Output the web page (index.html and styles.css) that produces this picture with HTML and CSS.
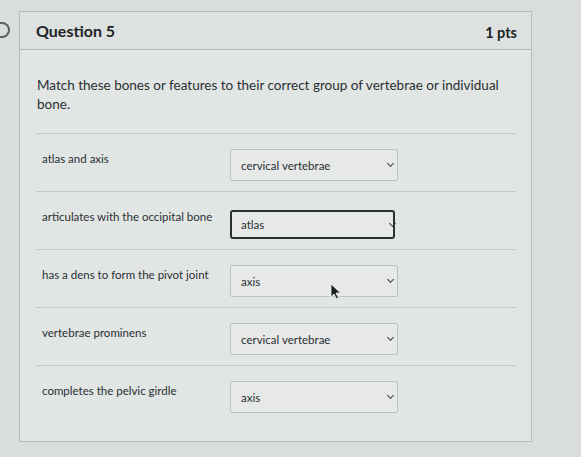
FILE: index.html
```html
<!DOCTYPE html>
<html>
<head>
<meta charset="utf-8">
<link rel="stylesheet" href="styles.css">
<title>Question 5</title>
</head>
<body>
 <div class="page">
  <!-- bookmark flag -->
  <div class="flag"></div>

  <div class="question">
   <div class="q-header">
    <span class="q-name">Question 5</span>
    <span class="q-pts">1 pts</span>
   </div>

   <div class="q-body">
    <p class="q-text">Match these bones or features to their correct group of vertebrae or individual bone.</p>

    <div class="match">
     <div class="match-row">
      <div class="match-label">atlas and axis</div>
      <div class="select"><span>cervical vertebrae</span><i class="chev"></i></div>
     </div>
     <div class="match-row">
      <div class="match-label">articulates with the occipital bone</div>
      <div class="select focus"><span>atlas</span><i class="chev"></i></div>
     </div>
     <div class="match-row">
      <div class="match-label">has a dens to form the pivot joint</div>
      <div class="select"><span>axis</span><i class="chev"></i>
       <svg class="cursor" width="12" height="17" viewBox="0 0 12 17"><path d="M1 1 L1 14 L4 11 L6.5 16 L8.5 15 L6 10 L10.5 10 Z" fill="#1b1f22" stroke="#f4f4f4" stroke-width="0.8"/></svg>
      </div>
     </div>
     <div class="match-row">
      <div class="match-label">vertebrae prominens</div>
      <div class="select"><span>cervical vertebrae</span><i class="chev"></i></div>
     </div>
     <div class="match-row">
      <div class="match-label">completes the pelvic girdle</div>
      <div class="select"><span>axis</span><i class="chev"></i></div>
     </div>
    </div>
   </div>
  </div>
 </div>
</body>
</html>
```

FILE: styles.css
```css
* {
  box-sizing: border-box;
}

body {
  margin: 0;
  background-color: #d9dddc;
  font-family: Lato, "Open Sans", sans-serif;
  color: #2a2f33;
}

.page {
  display: flex;
  align-items: flex-start;
  padding-top: 11px;
}

/* little flag on the left edge */
.flag {
  width: 12px;
  height: 16px;
  margin: 11px 9px 0 -2px;
  border: 2px solid #5b6166;
  border-left: none;
  border-radius: 0 8px 8px 0;
}

.question {
  width: 513px;
  height: 431px;
  border: 1px solid #b7bdbb;
  background-color: #e1e5e3;
}

.q-header {
  height: 38px;
  display: flex;
  align-items: center;
  justify-content: space-between;
  padding: 0 14px 0 16px;
  border-bottom: 1px solid #b2b8b6;
  background-color: #dde1df;
}

.q-name {
  font-size: 16px;
  font-weight: bold;
  color: #1e2326;
}

.q-pts {
  font-size: 14.5px;
  font-weight: bold;
  color: #1e2326;
  padding-top: 3px;
}

.q-body {
  padding: 26px 15px 0 17px;
}

.q-text {
  margin: 0 0 19px 0;
  font-size: 13.5px;
  line-height: 19px;
  width: 470px;
}

.match {
  margin-left: -1px;
  border-top: 1px solid #c3c8c6;
}

.match-row {
  display: flex;
  align-items: flex-start;
  padding: 15px 0 10px 6px;
  border-bottom: 1px solid #c3c8c6;
}

.match-row:last-child {
  border-bottom: none;
}

.match-label {
  width: 188px;
  padding-top: 3px;
  font-size: 11.5px;
  line-height: 14px;
}

.select {
  position: relative;
  width: 168px;
  height: 32px;
  display: flex;
  align-items: center;
  justify-content: space-between;
  padding: 0 4px 0 10px;
  border: 1px solid #bcc2c0;
  border-radius: 2px;
  background-color: #e6e9e8;
  font-size: 11.5px;
}

.select.focus {
  height: 29px;
  width: 165px;
  margin: 3px 0 0 0;
  border: 2px solid #2b3033;
  border-radius: 3px;
  padding: 0 0 0 9px;
}

.chev {
  width: 5px;
  height: 5px;
  margin-top: -3px;
  border-right: 1.5px solid #3a3f43;
  border-bottom: 1.5px solid #3a3f43;
  transform: rotate(45deg);
}

.select.focus .chev {
  margin-right: -2px;
}

/* mouse pointer over the third select */
.cursor {
  position: absolute;
  left: 99px;
  top: 17px;
}
```
